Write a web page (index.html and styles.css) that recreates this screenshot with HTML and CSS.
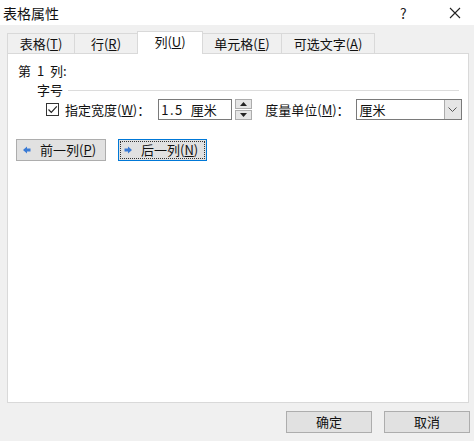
FILE: index.html
```html
<!DOCTYPE html>
<html lang="zh">
<head>
<meta charset="utf-8">
<title>表格属性</title>
<link rel="stylesheet" href="styles.css">
</head>
<body>
<div class="dialog">
  <div class="titlebar">
    <span class="title">表格属性</span>
    <span class="help">?</span>
    <span class="close">
      <svg width="12" height="12" viewBox="0 0 12 12"><path d="M1 1 L11 11 M11 1 L1 11" stroke="#222" stroke-width="1.1" fill="none"/></svg>
    </span>
  </div>
  <div class="tabs">
    <div class="tab t1">表格(<u>T</u>)</div>
    <div class="tab t2">行(<u>R</u>)</div>
    <div class="tab t3 active">列(<u>U</u>)</div>
    <div class="tab t4">单元格(<u>E</u>)</div>
    <div class="tab t5">可选文字(<u>A</u>)</div>
  </div>
  <div class="panel">
    <div class="colname">第 1 列:</div>
    <div class="group">
      <span class="legend">字号</span>
      <span class="rule"></span>
    </div>
    <div class="row">
      <span class="check">
        <svg width="11" height="11" viewBox="0 0 11 11"><path d="M1.5 5.5 L4.3 8.3 L9.8 2.3" stroke="#222" stroke-width="1.2" fill="none"/></svg>
      </span>
      <span class="label">指定宽度(<u>W</u>)：</span>
      <span class="input"><span class="num">1.5</span> 厘米</span>
      <span class="spin">
        <span class="spin-half"><svg width="7" height="4" viewBox="0 0 7 4"><path d="M0 4 L3.5 0 L7 4 Z" fill="#222"/></svg></span>
        <span class="spin-half"><svg width="7" height="4" viewBox="0 0 7 4"><path d="M0 0 L3.5 4 L7 0 Z" fill="#222"/></svg></span>
      </span>
      <span class="label unit">度量单位(<u>M</u>)：</span>
      <span class="select">
        <span class="select-text">厘米</span>
        <span class="select-btn"><svg width="9" height="5" viewBox="0 0 9 5"><path d="M0.5 0.5 L4.5 4.5 L8.5 0.5" stroke="#555" stroke-width="1" fill="none"/></svg></span>
      </span>
    </div>
    <div class="navrow">
      <span class="btn prev">
        <svg class="arrow" width="8" height="8" viewBox="0 0 8 8"><path d="M0 4 L4 0.5 L4 2.5 L7.5 2.5 L7.5 5.5 L4 5.5 L4 7.5 Z" fill="#3a7bd5"/></svg>
        前一列(<u>P</u>)
      </span>
      <span class="btn next focused">
        <span class="focus-inner">
          <svg class="arrow" width="8" height="8" viewBox="0 0 8 8"><path d="M8 4 L4 0.5 L4 2.5 L0.5 2.5 L0.5 5.5 L4 5.5 L4 7.5 Z" fill="#3a7bd5"/></svg>
          后一列(<u>N</u>)
        </span>
      </span>
    </div>
  </div>
  <div class="footer">
    <span class="btn dlg">确定</span>
    <span class="btn dlg">取消</span>
  </div>
</div>
</body>
</html>
```

FILE: styles.css
```css
html, body {
  margin: 0;
  padding: 0;
}
body {
  width: 474px;
  height: 441px;
  background: #f0f0f0;
  font-family: "Noto Sans CJK SC", "Noto Sans", sans-serif;
  font-size: 13px;
  color: #111;
  overflow: hidden;
}
u {
  text-decoration: underline;
  text-underline-offset: 1px;
}
.dialog {
  display: flex;
  flex-direction: column;
  height: 441px;
}
.titlebar {
  height: 25px;
  background: #ffffff;
  display: flex;
  align-items: center;
  padding-left: 3px;
}
.title {
  font-size: 14px;
  color: #111;
  flex: 1;
  line-height: 18px;
}
.help {
  font-size: 14px;
  width: 49px;
  color: #222;
}
.close {
  width: 25px;
  display: flex;
  align-items: center;
}
.tabs {
  display: flex;
  margin-top: 8px;
  margin-left: 7px;
  height: 20px;
  align-items: flex-end;
  position: relative;
  z-index: 1;
}
.tab {
  height: 19px;
  line-height: 19px;
  border: 1px solid #d9d9d9;
  border-bottom: none;
  margin-right: -1px;
  text-align: center;
  background: #f0f0f0;
  box-sizing: content-box;
}
.t1 { width: 66px; }
.t2 { width: 62px; }
.t3 { width: 64px; }
.t4 { width: 78px; }
.t5 { width: 92px; }
.tab.active {
  background: #ffffff;
  height: 22px;
  line-height: 20px;
  margin-bottom: -1px;
}
.panel {
  margin-left: 7px;
  margin-right: 5px;
  height: 350px;
  box-sizing: border-box;
  background: #ffffff;
  border: 1px solid #d9d9d9;
  padding-top: 7px;
}
.colname {
  padding-left: 10px;
  line-height: 19px;
  height: 19px;
  white-space: pre;
  word-spacing: 3px;
}
.group {
  display: flex;
  align-items: center;
  height: 19px;
  padding-left: 29px;
  padding-right: 9px;
}
.legend {
  line-height: 19px;
}
.rule {
  flex: 1;
  height: 1px;
  background: #dcdcdc;
  margin-left: 5px;
  margin-top: 1px;
}
.row {
  display: flex;
  align-items: center;
  margin-top: 0;
  height: 21px;
  padding-left: 38px;
}
.check {
  width: 13px;
  height: 13px;
  border: 1px solid #333;
  box-sizing: border-box;
  display: flex;
  align-items: center;
  justify-content: center;
  background: #fff;
}
.label {
  margin-left: 6px;
  white-space: nowrap;
}
.input {
  margin-left: 8px;
  width: 74px;
  height: 21px;
  box-sizing: border-box;
  border: 1px solid #7a7a7a;
  line-height: 19px;
  padding-left: 2px;
  white-space: pre;
  word-spacing: 4px;
}
.num {
  letter-spacing: 1.5px;
}
.spin {
  margin-left: 3px;
  width: 17px;
  height: 21px;
  display: flex;
  flex-direction: column;
  justify-content: center;
  gap: 1px;
}
.spin-half {
  height: 8px;
  background: #e5e5e5;
  border: 1px solid #acacac;
  display: flex;
  align-items: center;
  justify-content: center;
}
.unit {
  margin-left: 13px;
}
.select {
  margin-left: 6px;
  width: 106px;
  height: 21px;
  box-sizing: border-box;
  border: 1px solid #7a7a7a;
  display: flex;
  background: #fff;
}
.select-text {
  flex: 1;
  line-height: 19px;
  padding-left: 3px;
}
.select-btn {
  width: 16px;
  background: #e5e5e5;
  border-left: 1px solid #acacac;
  display: flex;
  align-items: center;
  justify-content: center;
}
.navrow {
  display: flex;
  margin-top: 19px;
  padding-left: 8px;
  gap: 12px;
}
.btn {
  height: 22px;
  box-sizing: border-box;
  border: 1px solid #adadad;
  background: #e1e1e1;
  display: flex;
  align-items: center;
  line-height: 18px;
}
.prev {
  width: 90px;
  padding-left: 6px;
}
.arrow {
  margin-right: 9px;
}
.next {
  width: 89px;
  border: 1px solid #0078d7;
  padding: 1px;
}
.focus-inner {
  flex: 1;
  height: 18px;
  border: 1px dotted #333;
  display: flex;
  align-items: center;
  padding-left: 3px;
  box-sizing: border-box;
}
.footer {
  display: flex;
  justify-content: flex-end;
  gap: 12px;
  margin-top: 8px;
  padding-right: 4px;
}
.btn.dlg {
  width: 86px;
  justify-content: center;
}
```
